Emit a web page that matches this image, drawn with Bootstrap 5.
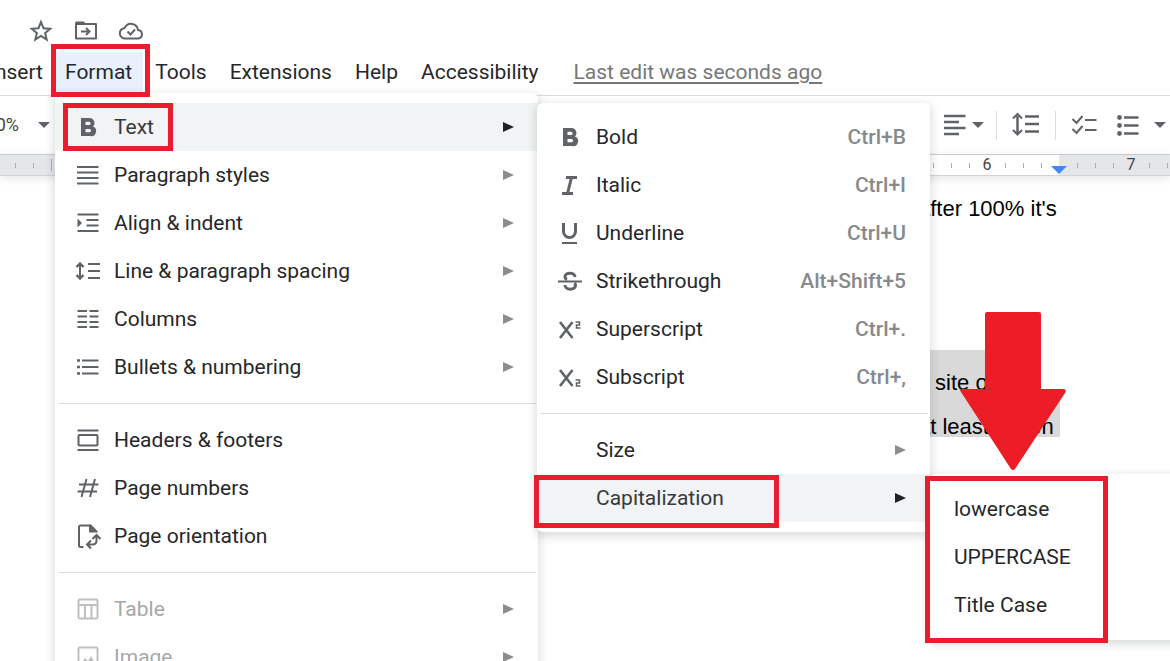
<!DOCTYPE html>
<html lang="en">
<head>
<meta charset="utf-8">
<meta name="viewport" content="width=device-width, initial-scale=1">
<title>Document editor</title>
<link href="https://cdn.jsdelivr.net/npm/bootstrap@5.3.0/dist/css/bootstrap.min.css" rel="stylesheet">
<style>
  :root { --ink: #26272a; --glyph: #5f6368; --mark-red: #e91d2d; --rule: #dadce0; }
  body { font-family: Roboto, "Liberation Sans", sans-serif; font-size: 21px; line-height: 28px; color: var(--ink); background: #fff; }
  svg { display: block; flex: none; }
  .ico { width: 24px; height: 24px; fill: none; stroke: var(--glyph); stroke-width: 2; overflow: visible; }
  .ico .solid { fill: var(--glyph); stroke: none; }
  .ico-wide { width: 26px; }
  .plain { border: 0; background: none; padding: 0; color: inherit; }

  .title-icons { padding: 19px 0 0 29px; gap: 21px; height: 52px; }
  .menu-bar { height: 43px; padding-bottom: 3px; }
  .menu-bar .plain { padding: 0 11px; height: 40px; white-space: nowrap; }
  .menu-bar > .plain { margin-left: 1px; }
  .cut-left { width: 54px; overflow: hidden; }
  .menu-bar .is-open { background: #e8f0fe; }
  .last-edit { color: #757779; margin-left: 24px; text-decoration-thickness: 2px; text-underline-offset: 3px; white-space: nowrap; }
  .last-edit:hover { color: var(--ink); }
  .top-bar { border-bottom: 1px solid var(--rule); }

  .tool-bar { height: 59px; border-bottom: 1px solid #d0d2d5; }
  .zoom-box { width: 50px; overflow: hidden; font-size: 18px; color: #444; gap: 19px; }
  .tool-set { padding-right: 4px; }
  .tool-split { width: 1px; height: 29px; background: var(--rule); }
  .align-btn { gap: 4px; margin-right: 12px; }

  .ruler { height: 21px; border-bottom: 1px solid #d0d2d5; box-shadow: 0 2px 8px rgba(60,64,67,.14); overflow: hidden; font-size: 16px; line-height: 20px; color: #444; }
  .ruler span { width: 18px; height: 20px; text-align: center; flex: none; display: flex; justify-content: center; align-items: center; }
  .ruler span:empty::before { content: ""; width: 1px; height: 5px; background: #a9abae; }
  .ruler .edge:empty::before { height: 12px; }
  .ruler .off { background: #e4e6ea; }
  .ruler .part { background: linear-gradient(90deg, #fff 50%, #e4e6ea 50%); }
  .ruler-end { margin-right: -6px; }
  .ruler-start { width: 55px; padding-left: 6px; }
  .indent-mark { left: 1px; top: 11px; }

  .doc { font: 22px/44px "Liberation Sans", Arial, sans-serif; color: #000; width: 142px; margin-right: 110px; padding-top: 11px; }
  .doc p { margin: 0; white-space: pre; }
  .picked { margin-top: 119px; }
  .picked p { background: #d9d9d9; width: fit-content; height: 43px; line-height: 66px; }
  .picked p:first-child { height: 44px; }

  .pop { position: absolute; background: #fff; box-shadow: 0 3px 9px 2px rgba(60,64,67,.17); border-radius: 0 6px 6px 6px; padding: 10px 0; margin: 0; list-style: none; z-index: 5; }
  .pop-format { left: 1px; top: 41px; width: 483px; }
  .pop-text { left: 482px; top: 0; width: 393px; border-radius: 6px; }
  .pop-case { left: 393px; top: 0; width: 300px; border-radius: 6px; padding: 11px 0; }
  .pop li { position: relative; }
  .pop .row-btn { display: flex; align-items: center; gap: 14px; width: 100%; height: 48px; padding: 0 24px 0 21px; border: 0; background: none; color: var(--ink); text-align: left; white-space: nowrap; }
  .pop .is-open > .row-btn { background: #f1f3f4; color: #37393c; }
  .pop .row-btn:disabled { color: #a6a8aa; }
  .pop .row-btn:disabled .ico { opacity: .4; }
  .pop .sep { height: 1px; background: var(--rule); margin: 12px 2px 12px 3px; }
  .keys { margin-left: auto; font-weight: 500; color: #87898c; }
  .more { margin-left: auto; width: 11px; height: 10px; fill: #8b8d90; }
  .is-open > .row-btn > .more { fill: #202124; }
  .no-ico { width: 24px; flex: none; }
  .pop .pop-case .row-btn { padding-left: 24px; }

  .ring { position: absolute; border: 5px solid var(--mark-red); pointer-events: none; z-index: 6; }
  .ring-format { left: -3px; top: -8px; width: 99px; height: 53px; }
  .ring-text { left: 8px; top: 0; width: 110px; height: 48px; }
  .ring-cap { left: -3px; top: 1px; width: 245px; height: 53px; }
  .ring-case { left: -5px; top: 2px; width: 183px; height: 167px; }
  .arrow { position: absolute; left: 30px; top: -162px; fill: #ec1d26; z-index: 6; pointer-events: none; }
</style>
</head>
<body class="vh-100 overflow-hidden">
<svg class="d-none" aria-hidden="true">
  <symbol id="more" viewBox="0 0 11 10"><path d="M0 0L11 5L0 10z"/></symbol>
  <symbol id="bold" viewBox="0 0 24 24"><path fill="#5f6368" stroke="none" fill-rule="evenodd" d="M5 3h8.500a5 5 0 0 1 3.500 8.500A5 5 0 0 1 14 21H5zM9.500 6.800v3.200h3.500a1.600 1.600 0 0 0 0-3.200zM9.500 14v3.200h4a1.600 1.600 0 0 0 0-3.200z"/></symbol>
</svg>

<header class="top-bar">
  <div class="title-icons d-flex align-items-start">
    <button class="plain" aria-label="Star"><svg class="ico" viewBox="0 0 24 24"><path d="M12 3l2.500 6.200 6.700.5-5.100 4.300 1.600 6.500-5.700-3.500-5.700 3.500 1.600-6.500L2.800 9.700l6.700-.5z"/></svg></button>
    <button class="plain" aria-label="Move"><svg class="ico" viewBox="0 0 24 24"><path d="M2 19V5h20v14.500H2z" stroke-linejoin="round"/><path class="solid" d="M2 2.500h8l2 3H1V4z"/><path d="M7 12.500h8M12 9l3.500 3.500L12 16"/></svg></button>
    <button class="plain" aria-label="Saved to cloud"><svg class="ico" viewBox="0 0 24 24"><path d="M6.500 19.500a5.300 5.300 0 0 1-.8-10.600A7 7 0 0 1 19 11a4.300 4.300 0 0 1 .5 8.500z"/><path d="M8.500 12.500l3 3 4.500-5"/></svg></button>
  </div>
  <nav class="menu-bar d-flex align-items-center" aria-label="Menu bar">
    <div class="cut-left d-flex justify-content-end"><button class="plain">Insert</button></div>
    <div class="position-relative">
      <button class="plain is-open" aria-expanded="true">Format</button>
      <div class="ring ring-format"></div>
      <ul class="pop pop-format">
        <li class="is-open">
          <button class="row-btn" aria-expanded="true"><svg class="ico"><use href="#bold"/></svg>Text<svg class="more"><use href="#more"/></svg></button>
          <div class="ring ring-text"></div>
          <ul class="pop pop-text">
            <li><button class="row-btn"><svg class="ico"><use href="#bold"/></svg>Bold<span class="keys">Ctrl+B</span></button></li>
            <li><button class="row-btn"><svg class="ico" viewBox="0 0 24 24"><path d="M8 4.500h11M4 20.500h11M13.500 4.500L9.500 20.500" stroke-width="3"/></svg>Italic<span class="keys">Ctrl+I</span></button></li>
            <li><button class="row-btn"><svg class="ico" viewBox="0 0 24 24"><path d="M5.500 2v8.500a6 6 0 0 0 12 0V2" stroke-width="3"/><path d="M4 22h15"/></svg>Underline<span class="keys">Ctrl+U</span></button></li>
            <li><button class="row-btn"><svg class="ico" viewBox="0 0 24 24"><path d="M17 8c0-5-10-5-10-.5 0 1.500.8 2.500 2 3M7 16c0 5.500 10.500 5.500 10.500.5 0-1-.3-1.800-1-2.500" stroke-width="3"/><path d="M0 12.500h24"/></svg>Strikethrough<span class="keys">Alt+Shift+5</span></button></li>
            <li><button class="row-btn"><svg class="ico" viewBox="0 0 24 24"><path d="M2 5l12.500 16M14.500 5L2 21" stroke-width="2.600"/><path d="M17.500 5h4v3h-3v3h4" stroke-width="1.500"/></svg>Superscript<span class="keys">Ctrl+.</span></button></li>
            <li><button class="row-btn"><svg class="ico" viewBox="0 0 24 24"><path d="M2 5l12.500 16M14.500 5L2 21" stroke-width="2.600"/><path d="M17.500 15h4v3h-3v3h4" stroke-width="1.500"/></svg>Subscript<span class="keys">Ctrl+,</span></button></li>
            <li class="sep" role="separator"></li>
            <li><button class="row-btn"><span class="no-ico"></span>Size<svg class="more"><use href="#more"/></svg></button></li>
            <li class="is-open">
              <button class="row-btn" aria-expanded="true"><span class="no-ico"></span>Capitalization<svg class="more"><use href="#more"/></svg></button>
              <div class="ring ring-cap"></div>
              <ul class="pop pop-case">
                <li><button class="row-btn">lowercase</button></li>
                <li><button class="row-btn">UPPERCASE</button></li>
                <li><button class="row-btn">Title Case</button></li>
              </ul>
              <div class="position-absolute top-0 start-100">
                <div class="ring ring-case"></div>
                <svg class="arrow" width="106" height="159" viewBox="0 0 106 159"><path d="M25 2a2 2 0 0 1 2-2h52a2 2 0 0 1 2 2v75h23q3 1 1 4L55 157q-2 2-4 0L1 80q-2-2 1-3h23z"/></svg>
              </div>
            </li>
          </ul>
        </li>
        <li><button class="row-btn"><svg class="ico" viewBox="0 0 24 24"><path d="M1 4h21.500M1 9.500h21.500M1 15h21.500M1 20.500h21.500"/></svg>Paragraph styles<svg class="more"><use href="#more"/></svg></button></li>
        <li><button class="row-btn"><svg class="ico" viewBox="0 0 24 24"><path d="M1.500 3.500h21M10.500 9h12M10.500 14.500h12M1.500 20h21"/><path class="solid" d="M1.500 7.500L6 12l-4.500 4.500z"/></svg>Align &amp; indent<svg class="more"><use href="#more"/></svg></button></li>
        <li><button class="row-btn"><svg class="ico" viewBox="0 0 24 24"><path d="M12 5h12M12 12h12M12 19h12M4 6v12"/><path d="M.5 8L4 4.500 7.500 8M.5 16L4 19.500 7.500 16" stroke-width="2.400"/></svg>Line &amp; paragraph spacing<svg class="more"><use href="#more"/></svg></button></li>
        <li><button class="row-btn"><svg class="ico" viewBox="0 0 24 24"><path d="M1.500 4H11M1.500 9.500H11M1.500 15H11M1.500 20H11M13.500 4h9M13.500 9.500h9M13.500 15h9M13.500 20h9"/></svg>Columns<svg class="more"><use href="#more"/></svg></button></li>
        <li><button class="row-btn"><svg class="ico" viewBox="0 0 24 24"><path d="M6 5.500h16.500M6 12h16.500M6 18.500h16.500"/><path d="M1 5.500h3M1 12h3M1 18.500h3" stroke-width="2.600"/></svg>Bullets &amp; numbering<svg class="more"><use href="#more"/></svg></button></li>
        <li class="sep" role="separator"></li>
        <li><button class="row-btn"><svg class="ico" viewBox="0 0 24 24"><path d="M1.500 2.500h21M1.500 22h21"/><rect x="2.500" y="7" width="19" height="10.500" rx="1"/></svg>Headers &amp; footers</button></li>
        <li><button class="row-btn"><svg class="ico" viewBox="0 0 24 24"><path d="M3 8.500h19.500M1.500 15.500H21M10.500 3l-5 18M19 3l-5 18"/></svg>Page numbers</button></li>
        <li><button class="row-btn"><svg class="ico" viewBox="0 0 24 24"><path d="M7.500 23h-3a1.500 1.500 0 0 1-1.500-1.500V3a1.500 1.500 0 0 1 1.500-1.500H14"/><path class="solid" d="M13 .5h2L21.500 7v1.500H13z"/><path d="M20.500 12v4.500q0 4-4 4h-5M16.500 15l4-4 4 4M15 16.500l-4 4 4 4"/></svg>Page orientation</button></li>
        <li class="sep" role="separator"></li>
        <li><button class="row-btn" disabled><svg class="ico" viewBox="0 0 24 24"><rect x="2.500" y="2.500" width="19" height="19" rx="1.500"/><path d="M2.500 8h19M9 8v13M15.500 8v13"/></svg>Table<svg class="more"><use href="#more"/></svg></button></li>
        <li><button class="row-btn" disabled><svg class="ico" viewBox="0 0 24 24"><rect x="2.500" y="2.500" width="19" height="19" rx="1.500"/><path class="solid" d="M5 18l4-5 3 3 3-5 4 7z"/></svg>Image<svg class="more"><use href="#more"/></svg></button></li>
      </ul>
    </div>
    <button class="plain">Tools</button>
    <button class="plain">Extensions</button>
    <button class="plain">Help</button>
    <button class="plain">Accessibility</button>
    <a class="last-edit" href="#">Last edit was seconds ago</a>
  </nav>
</header>

<div class="tool-bar d-flex align-items-center justify-content-between">
  <button class="plain zoom-box d-flex align-items-center justify-content-end" aria-label="Zoom"><span>100%</span><svg width="12" height="6" fill="#5f6368"><path d="M0 0h12L6 6z"/></svg></button>
  <div class="tool-set d-flex align-items-center">
    <button class="plain align-btn d-flex align-items-center" aria-label="Align"><svg class="ico" viewBox="0 0 24 24"><path d="M0 3h21.500M0 9h15M0 15h21.500M0 21h15" stroke-width="2.500"/></svg><svg width="12" height="6" fill="#5f6368"><path d="M0 0h12L6 6z"/></svg></button>
    <span class="tool-split me-3"></span>
    <button class="plain me-3" aria-label="Line spacing"><svg class="ico ico-wide" viewBox="0 0 26 24"><path d="M12 3.500h14M12 11h14M12 18.500h14M4.500 3v17" stroke-width="2.500"/><path d="M0 5.500L4.500 1 9 5.500M0 17l4.500 4.500L9 17"/></svg></button>
    <span class="tool-split me-3"></span>
    <button class="plain me-3" aria-label="Checklist"><svg class="ico ico-wide" viewBox="0 0 26 24"><path d="M13 7h11.500M13 17h11.500M.5 6l4 4 6-7M.5 16l4 4 6-7"/></svg></button>
    <button class="plain me-3" aria-label="Bulleted list"><svg class="ico" viewBox="-3 0 24 24"><path d="M7 4.500h14.500M7 12.500h14.500M7 20.500h14.500" stroke-width="2.500"/><g class="solid"><circle cx="2.500" cy="4.500" r="2.400"/><circle cx="2.500" cy="12.500" r="2.400"/><circle cx="2.500" cy="20.500" r="2.400"/></g></svg></button>
    <button class="plain" aria-label="List options"><svg width="12" height="6" fill="#5f6368"><path d="M0 0h12L6 6z"/></svg></button>
  </div>
</div>

<div class="ruler d-flex justify-content-between">
  <div class="ruler-start off d-flex"><span></span><span></span><span class="edge"></span></div>
  <div class="ruler-end d-flex">
    <span></span><span></span><span></span><span>6</span><span></span><span></span><span></span>
    <span class="part position-relative"><svg class="indent-mark position-absolute" width="16" height="8" fill="#4285f4"><path d="M0 0h16L8 8z"/></svg></span>
    <span class="off"></span><span class="off"></span><span class="off"></span><span class="off">7</span><span class="off"></span><span class="off"></span>
  </div>
</div>

<main class="doc ms-auto">
  <p>after 100% it's</p>
  <div class="picked"><p>s site on </p><p>at least seven </p></div>
</main>
<script src="https://cdn.jsdelivr.net/npm/bootstrap@5.3.0/dist/js/bootstrap.bundle.min.js"></script>
</body>
</html>
